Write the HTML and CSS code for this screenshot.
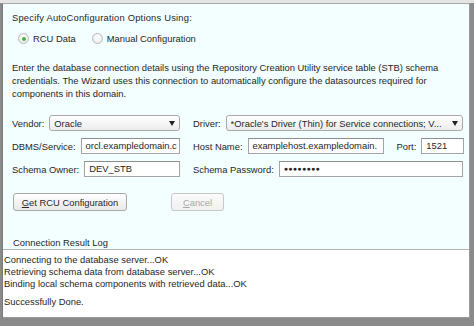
FILE: index.html
```html
<!DOCTYPE html>
<html>
<head>
<meta charset="utf-8">
<link rel="stylesheet" href="styles.css">
</head>
<body>
<div class="frame">
  <div class="panel">
    <div class="content">
      <div class="heading">Specify AutoConfiguration Options Using:</div>
      <div class="radios">
        <label class="radio"><span class="dot checked"></span>RCU Data</label>
        <label class="radio"><span class="dot"></span>Manual Configuration</label>
      </div>
      <p class="para">Enter the database connection details using the Repository Creation Utility service table (STB) schema credentials. The Wizard uses this connection to automatically configure the datasources required for components in this domain.</p>
      <div class="form">
        <div class="row">
          <div class="half left">
            <span class="lbl">Vendor:</span>
            <div class="select"><span class="val">Oracle</span><span class="arrow"></span></div>
          </div>
          <div class="half right">
            <span class="lbl">Driver:</span>
            <div class="select"><span class="val">*Oracle's Driver (Thin) for Service connections; V...</span><span class="arrow"></span></div>
          </div>
        </div>
        <div class="row">
          <div class="half left">
            <span class="lbl">DBMS/Service:</span>
            <div class="input">orcl.exampledomain.c</div>
          </div>
          <div class="half right">
            <span class="lbl">Host Name:</span>
            <div class="input host">examplehost.exampledomain.</div>
            <span class="lbl port-lbl">Port:</span>
            <div class="input port">1521</div>
          </div>
        </div>
        <div class="row">
          <div class="half left">
            <span class="lbl">Schema Owner:</span>
            <div class="input">DEV_STB</div>
          </div>
          <div class="half right">
            <span class="lbl">Schema Password:</span>
            <div class="input pw">●●●●●●●●</div>
          </div>
        </div>
      </div>
      <div class="buttons">
        <button class="btn get"><u>G</u>et RCU Configuration</button>
        <button class="btn cancel" disabled><u>C</u>ancel</button>
      </div>
      <div class="log-title">Connection Result Log</div>
    </div>
    <div class="log">
      <div>Connecting to the database server...OK</div>
      <div>Retrieving schema data from database server...OK</div>
      <div>Binding local schema components with retrieved data...OK</div>
      <div class="blank">&nbsp;</div>
      <div>Successfully Done.</div>
    </div>
  </div>
</div>
</body>
</html>
```
FILE: styles.css
```css
* { box-sizing: border-box; }
html, body {
  margin: 0;
  padding: 0;
}
body {
  width: 474px;
  height: 326px;
  overflow: hidden;
  background: #c9c9c9;
  font-family: "Liberation Sans", Arial, sans-serif;
  font-size: 9.4px;
  color: #262626;
}
.frame {
  padding-top: 3px;
  padding-left: 2px;
  padding-right: 4px;
  height: 326px;
  background: linear-gradient(#e4e4e4, #e4e4e4) top/100% 3px no-repeat, #8a8a8a;
}
.panel {
  background: #f3fefe;
  border-top: 1px solid #a9a9a9;
  border-left: 1px solid #7a7a7a;
  border-right: 1px solid #9a9a9a;
  height: 315px;
  display: flex;
  flex-direction: column;
}
.content {
  padding: 7px 0 0 9px;
}
.heading {
  line-height: 13px;
  letter-spacing: 0.2px;
}
.radios {
  display: flex;
  gap: 16px;
  margin-top: 8px;
  padding-left: 6px;
  line-height: 13px;
}
.radio {
  display: flex;
  align-items: center;
  gap: 4px;
}
.dot {
  width: 11px;
  height: 11px;
  border-radius: 50%;
  border: 1px solid #b9b9b9;
  background: radial-gradient(circle at 50% 40%, #ffffff, #e6e6e6);
  position: relative;
}
.dot.checked::after {
  content: "";
  position: absolute;
  left: 2.5px;
  top: 2.5px;
  width: 4px;
  height: 4px;
  border-radius: 50%;
  background: #4caf3a;
}
.para {
  margin: 16px 0 0 0;
  line-height: 13px;
  width: 455px;
}
.form {
  margin-top: 15px;
  display: flex;
  flex-direction: column;
  gap: 7px;
}
.row {
  display: flex;
  gap: 13px;
  height: 16px;
}
.half {
  display: flex;
  align-items: center;
}
.half.left { width: 168px; }
.half.right { width: 270px; }
.lbl {
  margin-right: 5px;
  white-space: nowrap;
}
.port-lbl { margin-left: 13px; }
.select {
  flex: 1;
  height: 16px;
  border: 1px solid #a8a8a8;
  border-radius: 3px;
  background: linear-gradient(#ffffff, #ececec);
  display: flex;
  align-items: center;
  padding: 0 4px;
  min-width: 0;
}
.select .val {
  flex: 1;
  white-space: nowrap;
  overflow: hidden;
}
.arrow {
  width: 0;
  height: 0;
  border-left: 3.5px solid transparent;
  border-right: 3.5px solid transparent;
  border-top: 5px solid #222;
  margin-left: 4px;
}
.input {
  flex: 1;
  height: 16px;
  background: #fff;
  border: 1px solid #a4a4a4;
  border-top-color: #8e8e8e;
  padding: 0 4px;
  line-height: 14px;
  white-space: nowrap;
  overflow: hidden;
  min-width: 0;
}
.input.host { flex: 0 0 136px; }
.input.port { flex: 0 0 43px; }
.input.pw { font-size: 7px; letter-spacing: 0.3px; }
.buttons {
  margin-top: 16px;
  display: flex;
  gap: 44px;
  padding-left: 1px;
}
.btn {
  font-family: inherit;
  font-size: inherit;
  height: 18px;
  padding: 0;
  border: 1px solid #a9a9a9;
  border-radius: 3px;
  background: linear-gradient(#ffffff, #e9e9e9);
  color: #262626;
}
.btn u { text-decoration: underline; }
.btn.get { width: 114px; }
.btn.cancel { width: 53px; color: #a8a8a8; border-color: #c8c8c8; background: linear-gradient(#fbfbfb, #f0f0f0); }
.log-title {
  margin-top: 25px;
  padding-left: 1px;
  line-height: 13px;
}
.log {
  margin-top: 0;
  flex: 1;
  background: #fff;
  border-top: 1px solid #b4b4b4;
  border-bottom: 1px solid #9a9a9a;
  padding: 4px 0 0 1px;
  line-height: 12px;
}
.log .blank { height: 6px; }
```
